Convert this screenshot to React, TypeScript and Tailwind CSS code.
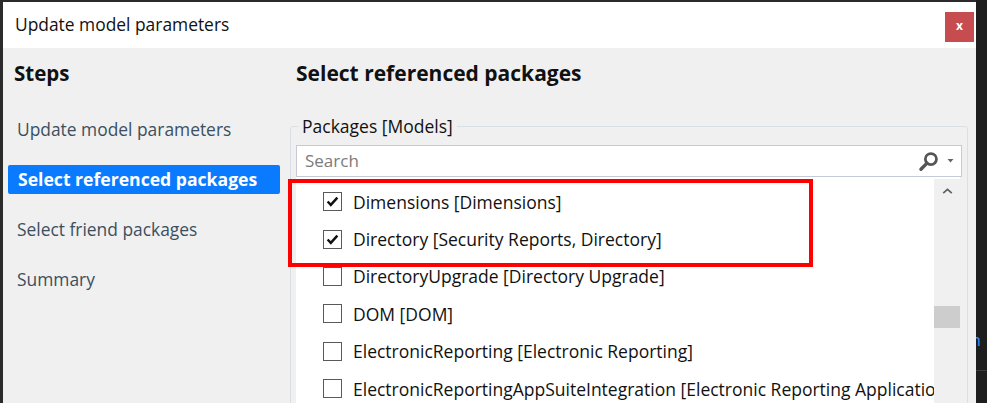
import React from "react";

const steps = [
  { label: "Update model parameters", active: false },
  { label: "Select referenced packages", active: true },
  { label: "Select friend packages", active: false },
  { label: "Summary", active: false },
];

const packages = [
  { name: "Dimensions [Dimensions]", checked: true },
  { name: "Directory [Security Reports, Directory]", checked: true },
  { name: "DirectoryUpgrade [Directory Upgrade]", checked: false },
  { name: "DOM [DOM]", checked: false },
  { name: "ElectronicReporting [Electronic Reporting]", checked: false },
  {
    name: "ElectronicReportingAppSuiteIntegration [Electronic Reporting Application Suite Integration]",
    checked: false,
  },
];

function Checkbox({ checked }: { checked: boolean }) {
  return (
    <span className="flex h-[19px] w-[19px] flex-shrink-0 items-center justify-center border border-[#5a5a5a] bg-white">
      {checked && (
        <svg viewBox="0 0 16 16" className="h-[15px] w-[15px]" aria-hidden="true">
          <path d="M2.8 8l3.4 3.6L13.2 3.8" fill="none" stroke="#111" strokeWidth={2.6} />
        </svg>
      )}
    </span>
  );
}

export default function App() {
  return (
    <div className="relative flex h-[403px] w-[987px] overflow-hidden bg-[#2b2b2b] font-['Open_Sans','Noto_Sans',sans-serif]">
      {/* dialog */}
      <div className="ml-[3px] mt-[2px] flex w-[973px] min-w-0 flex-col">
        {/* title bar */}
        <div className="flex h-[46px] flex-shrink-0 items-start justify-between bg-white">
          <div className="pl-[12px] pt-[10px] text-[17.4px] leading-[24px] text-[#111]">
            Update model parameters
          </div>
          <button className="mr-[2px] mt-[10px] flex h-[30px] w-[29px] items-center justify-center bg-[#c74c50] pb-[2px] text-[12px] font-bold leading-none text-white">
            x
          </button>
        </div>

        {/* body */}
        <div className="flex min-w-0 flex-1 overflow-hidden bg-[#f0f0f0]">
          {/* steps */}
          <div className="w-[282px] flex-shrink-0 pt-[13px]">
            <div className="pl-[11px] text-[20.5px] font-bold leading-[24px] text-[#111]">Steps</div>
            <div className="mt-[30px] flex flex-col gap-[21px]">
              {steps.map((s) => (
                <div
                  key={s.label}
                  className={
                    s.active
                      ? "mx-[5px] flex h-[29px] items-center rounded-[2px] bg-[#0a7aff] pl-[10px] text-[17.6px] font-bold text-white"
                      : "mx-[5px] flex h-[29px] items-center pl-[9px] text-[17.4px] text-[#3b4f5f]"
                  }
                >
                  {s.label}
                </div>
              ))}
            </div>
          </div>

          {/* content */}
          <div className="flex min-w-0 flex-1 flex-col pt-[13px]">
            <div className="pl-[11px] text-[21px] font-bold leading-[24px] text-[#111]">
              Select referenced packages
            </div>
            <fieldset className="ml-[5px] mr-[8px] mt-[30px] min-w-0 flex-1 rounded-[3px] border border-[#d8e0e6] pl-[5px] pr-[5px]">
              <legend className="ml-[2px] px-[4px] text-[17.5px] leading-[22px] text-[#111]">
                Packages [Models]
              </legend>
              <div className="mt-[8px] flex h-[32px] items-center border border-[#c6cad8] bg-white">
                <span className="flex-1 pl-[8px] text-[17px] text-[#7b7b7b]">Search</span>
                <svg viewBox="0 0 20 20" className="h-[21px] w-[21px]" aria-hidden="true">
                  <circle cx="12.3" cy="7.7" r="5.3" fill="none" stroke="#555" strokeWidth={2.6} />
                  <path d="M8.6 11.6L2.8 17.4" stroke="#555" strokeWidth={3.2} strokeLinecap="round" />
                </svg>
                <svg viewBox="0 0 6 4" className="ml-[8px] mr-[7px] h-[4px] w-[7px]" aria-hidden="true">
                  <path d="M0 0h6L3 3.5z" fill="#666" />
                </svg>
              </div>
              <div className="mr-[2px] flex h-[240px] min-w-0 bg-white">
                <div className="min-w-0 flex-1 overflow-hidden pt-[6px]">
                  {packages.map((p) => (
                    <div key={p.name} className="flex h-[37.4px] items-center gap-[11px] pl-[27px]">
                      <Checkbox checked={p.checked} />
                      <span className="whitespace-nowrap text-[17.5px] text-[#111]">{p.name}</span>
                    </div>
                  ))}
                </div>
                <div className="mt-[2px] flex w-[26px] flex-shrink-0 flex-col items-center bg-[#f0f0f0]">
                  <svg viewBox="0 0 12 7" className="mt-[9px] h-[6px] w-[11px]" aria-hidden="true">
                    <path d="M1 6l5-4.5L11 6" fill="none" stroke="#606060" strokeWidth={2} />
                  </svg>
                  <div className="mt-[112px] h-[22px] w-full bg-[#cdcdcd]" />
                </div>
              </div>
            </fieldset>
          </div>
        </div>
      </div>

      {/* editor behind */}
      <div className="flex-1 overflow-hidden bg-[#1e1e1e]">
        <div className="-ml-[5px] mt-[330px] text-[16px] leading-[20px] text-[#3794ff]">n</div>
        <div className="mt-[20px] h-px bg-[#3c3c3c]" />
      </div>

      {/* annotation */}
      <div className="pointer-events-none absolute left-[288px] top-[179px] h-[88px] w-[525px] border-4 border-[#ff0000]" />
    </div>
  );
}
